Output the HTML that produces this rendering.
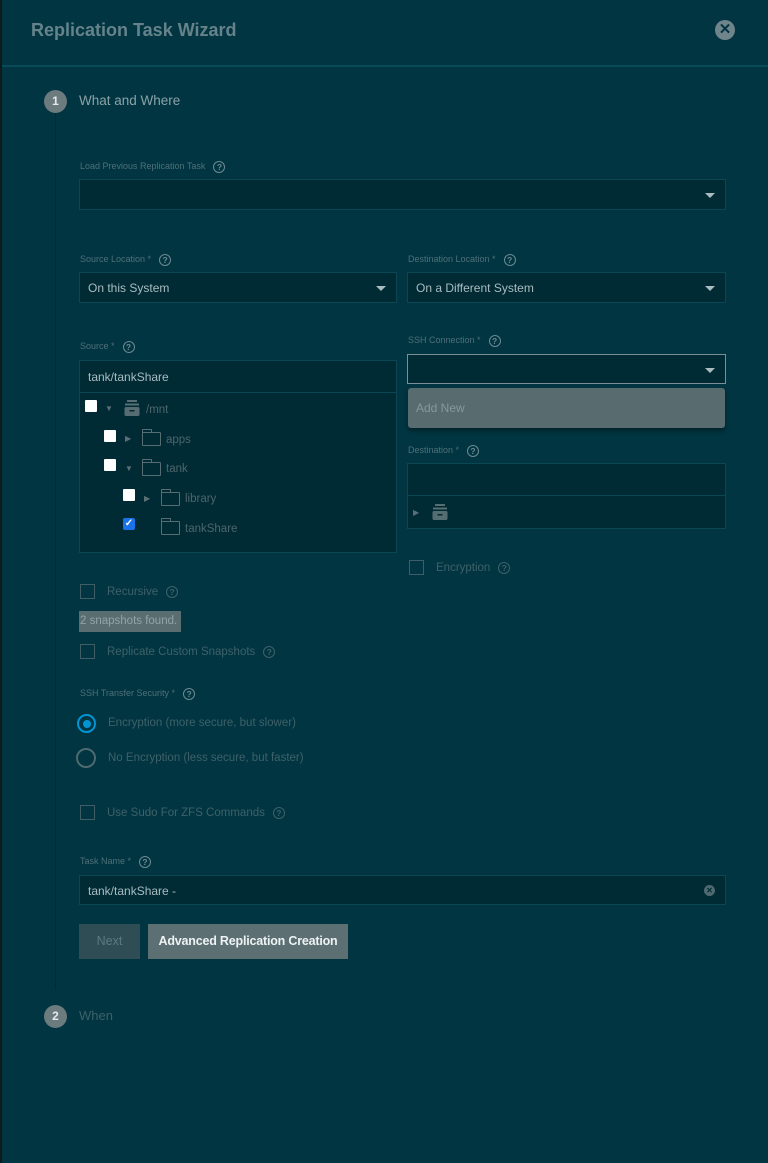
<!DOCTYPE html>
<html><head><meta charset="utf-8"><style>
*{margin:0;padding:0;box-sizing:border-box}
body{width:768px;height:1163px;background:#003541;font-family:"Liberation Sans",sans-serif;position:relative;overflow:hidden}
.a{position:absolute}
.lbl{position:absolute;font-size:9px;color:#4f7079;white-space:nowrap;line-height:12px}
.q{display:inline-block;width:12px;height:12px;border:1.3px solid #6d8a91;border-radius:50%;font-size:8.5px;line-height:10px;text-align:center;color:#6d8a91;margin-left:8px;vertical-align:middle;font-weight:bold}
.inp{position:absolute;background:#002b35;border:1px solid #0b4654}
.val{position:absolute;left:8px;font-size:12px;color:#a9bcc0;line-height:14px}
.caret{position:absolute;right:10px;top:13px;width:0;height:0;border-left:5px solid transparent;border-right:5px solid transparent;border-top:5px solid #a9bcc0}
.cb{position:absolute;width:15px;height:15px;border:1.5px solid #3f5d64}
.wcb{position:absolute;width:12px;height:12px;background:#fff;border-radius:1px}
.txt{position:absolute;font-size:11.5px;color:#3f6169;white-space:nowrap;line-height:14px}
.tri{position:absolute;font-size:8px;color:#5a7075}
.fold{position:absolute;width:19px;height:14px;border:1.5px solid #566d72;border-radius:1px}
.fold:before{content:"";position:absolute;left:-1.5px;top:-4px;width:8px;height:3px;border:1.5px solid #566d72;border-bottom:none;border-radius:1px 1px 0 0}
.tt{position:absolute;font-size:11.5px;color:#4d666b;line-height:14px}
</style></head><body>
<div class="a" style="left:0;top:0;width:2px;height:1163px;background:#0e1a1d"></div>
<div class="a" style="left:31px;top:20px;font-size:18px;font-weight:bold;color:#66838b">Replication Task Wizard</div>
<div class="a" style="left:715px;top:20px;width:20px;height:20px;border-radius:50%;background:#6f858b;color:#003541;font-size:15px;line-height:20px;text-align:center;font-weight:bold">✕</div>
<div class="a" style="left:2px;top:65px;width:766px;height:2px;background:#074a58"></div>

<div class="a" style="left:55px;top:113px;width:1px;height:877px;background:#14252a"></div>
<div class="a" style="left:44px;top:90px;width:23px;height:23px;border-radius:50%;background:#6c7b7e;color:#e4eaeb;font-size:12px;font-weight:bold;line-height:23px;text-align:center">1</div>
<div class="a" style="left:79px;top:93px;font-size:13.5px;color:#8aa2a8">What and Where</div>

<div class="lbl" style="left:80px;top:160px">Load Previous Replication Task<span class="q">?</span></div>
<div class="inp" style="left:79px;top:179px;width:647px;height:31px"><div class="caret"></div></div>

<div class="lbl" style="left:80px;top:253px">Source Location *<span class="q">?</span></div>
<div class="inp" style="left:79px;top:272px;width:318px;height:31px"><div class="val" style="top:8px">On this System</div><div class="caret"></div></div>
<div class="lbl" style="left:408px;top:253px">Destination Location *<span class="q">?</span></div>
<div class="inp" style="left:407px;top:272px;width:319px;height:31px"><div class="val" style="top:8px">On a Different System</div><div class="caret"></div></div>

<div class="lbl" style="left:80px;top:340px">Source *<span class="q">?</span></div>
<div class="inp" style="left:79px;top:360px;width:318px;height:33px"><div class="val" style="top:9px">tank/tankShare</div></div>
<div class="inp" style="left:79px;top:392px;width:318px;height:161px"></div>
<div class="wcb" style="left:85px;top:400px"></div><div class="tri" style="left:105px;top:404px">▼</div>
<svg class="a" style="left:123px;top:399px" width="18" height="18" viewBox="0 0 18 18"><rect x="4" y="1" width="10" height="2" fill="#566d72"/><rect x="2" y="4.5" width="14" height="2" fill="#566d72"/><rect x="1.5" y="8" width="15" height="9" rx="1.5" fill="#566d72"/><rect x="6.5" y="11" width="5" height="1.5" fill="#002b35"/></svg>
<div class="tt" style="left:146px;top:403px">/mnt</div>
<div class="wcb" style="left:104px;top:430px"></div><div class="tri" style="left:125px;top:434px">▶</div><div class="fold" style="left:142px;top:432px"></div><div class="tt" style="left:166px;top:433px">apps</div>
<div class="wcb" style="left:104px;top:459px"></div><div class="tri" style="left:125px;top:464px">▼</div><div class="fold" style="left:142px;top:462px"></div><div class="tt" style="left:166px;top:462px">tank</div>
<div class="wcb" style="left:123px;top:489px"></div><div class="tri" style="left:144px;top:494px">▶</div><div class="fold" style="left:161px;top:492px"></div><div class="tt" style="left:185px;top:492px">library</div>
<div class="a" style="left:123px;top:518px;width:12px;height:12px;background:#1a73e8;border-radius:2px;color:#fff;font-size:10px;line-height:12px;text-align:center;font-weight:bold">✓</div><div class="fold" style="left:161px;top:521px"></div><div class="tt" style="left:185px;top:522px">tankShare</div>

<div class="lbl" style="left:408px;top:334px">SSH Connection *<span class="q">?</span></div>
<div class="inp" style="left:407px;top:354px;width:319px;height:30px;border-color:#7a9095"><div class="caret"></div></div>
<div class="a" style="left:408px;top:388px;width:317px;height:40px;background:#586b6e;border-radius:3px;box-shadow:0 3px 5px rgba(0,0,0,.35)"><div style="position:absolute;left:8px;top:13px;font-size:12px;color:#849a9d">Add New</div></div>

<div class="lbl" style="left:408px;top:444px">Destination *<span class="q">?</span></div>
<div class="inp" style="left:407px;top:463px;width:319px;height:33px"></div>
<div class="inp" style="left:407px;top:495px;width:319px;height:34px"></div>
<div class="tri" style="left:413px;top:508px">▶</div>
<svg class="a" style="left:431px;top:503px" width="18" height="18" viewBox="0 0 18 18"><rect x="4" y="1" width="10" height="2" fill="#566d72"/><rect x="2" y="4.5" width="14" height="2" fill="#566d72"/><rect x="1.5" y="8" width="15" height="9" rx="1.5" fill="#566d72"/><rect x="6.5" y="11" width="5" height="1.5" fill="#002b35"/></svg>

<div class="cb" style="left:409px;top:560px"></div><div class="txt" style="left:436px;top:561px">Encryption<span class="q" style="border-color:#3f6169;color:#3f6169">?</span></div>

<div class="cb" style="left:80px;top:584px"></div><div class="txt" style="left:107px;top:585px">Recursive<span class="q" style="border-color:#3f6169;color:#3f6169">?</span></div>
<div class="a" style="left:79px;top:611px;width:102px;height:21px;background:#5a6e72;color:#91a5a8;font-size:11.5px;line-height:21px;padding-left:1px">2 snapshots found.</div>
<div class="cb" style="left:80px;top:644px"></div><div class="txt" style="left:107px;top:645px">Replicate Custom Snapshots<span class="q" style="border-color:#3f6169;color:#3f6169">?</span></div>

<div class="lbl" style="left:80px;top:687px">SSH Transfer Security *<span class="q">?</span></div>
<div class="a" style="left:77px;top:714px;width:19px;height:19px;border:2px solid #0095d5;border-radius:50%"><div style="position:absolute;left:3.5px;top:3.5px;width:8px;height:8px;border-radius:50%;background:#0095d5"></div></div>
<div class="txt" style="left:108px;top:716px">Encryption (more secure, but slower)</div>
<div class="a" style="left:76px;top:748px;width:20px;height:20px;border:2px solid #4e6a71;border-radius:50%"></div>
<div class="txt" style="left:108px;top:751px">No Encryption (less secure, but faster)</div>

<div class="cb" style="left:80px;top:805px"></div><div class="txt" style="left:107px;top:806px">Use Sudo For ZFS Commands<span class="q" style="border-color:#3f6169;color:#3f6169">?</span></div>

<div class="lbl" style="left:80px;top:855px">Task Name *<span class="q">?</span></div>
<div class="inp" style="left:79px;top:875px;width:647px;height:30px"><div class="val" style="top:8px">tank/tankShare -</div>
<div style="position:absolute;right:10px;top:9px;width:11px;height:11px;border-radius:50%;background:#4f6a70;color:#002b35;font-size:8px;line-height:11px;text-align:center;font-weight:bold">✕</div></div>

<div class="a" style="left:79px;top:924px;width:61px;height:35px;background:#2e4d55;color:#5b7a81;font-size:12.5px;line-height:35px;text-align:center">Next</div>
<div class="a" style="left:148px;top:924px;width:200px;height:35px;background:#5c6f73;color:#eef2f3;font-size:12.5px;font-weight:bold;line-height:35px;text-align:center;letter-spacing:-0.2px">Advanced Replication Creation</div>

<div class="a" style="left:44px;top:1005px;width:23px;height:23px;border-radius:50%;background:#6c7b7e;color:#e4eaeb;font-size:12px;font-weight:bold;line-height:23px;text-align:center">2</div>
<div class="a" style="left:79px;top:1008px;font-size:13px;color:#3f6169">When</div>
</body></html>
